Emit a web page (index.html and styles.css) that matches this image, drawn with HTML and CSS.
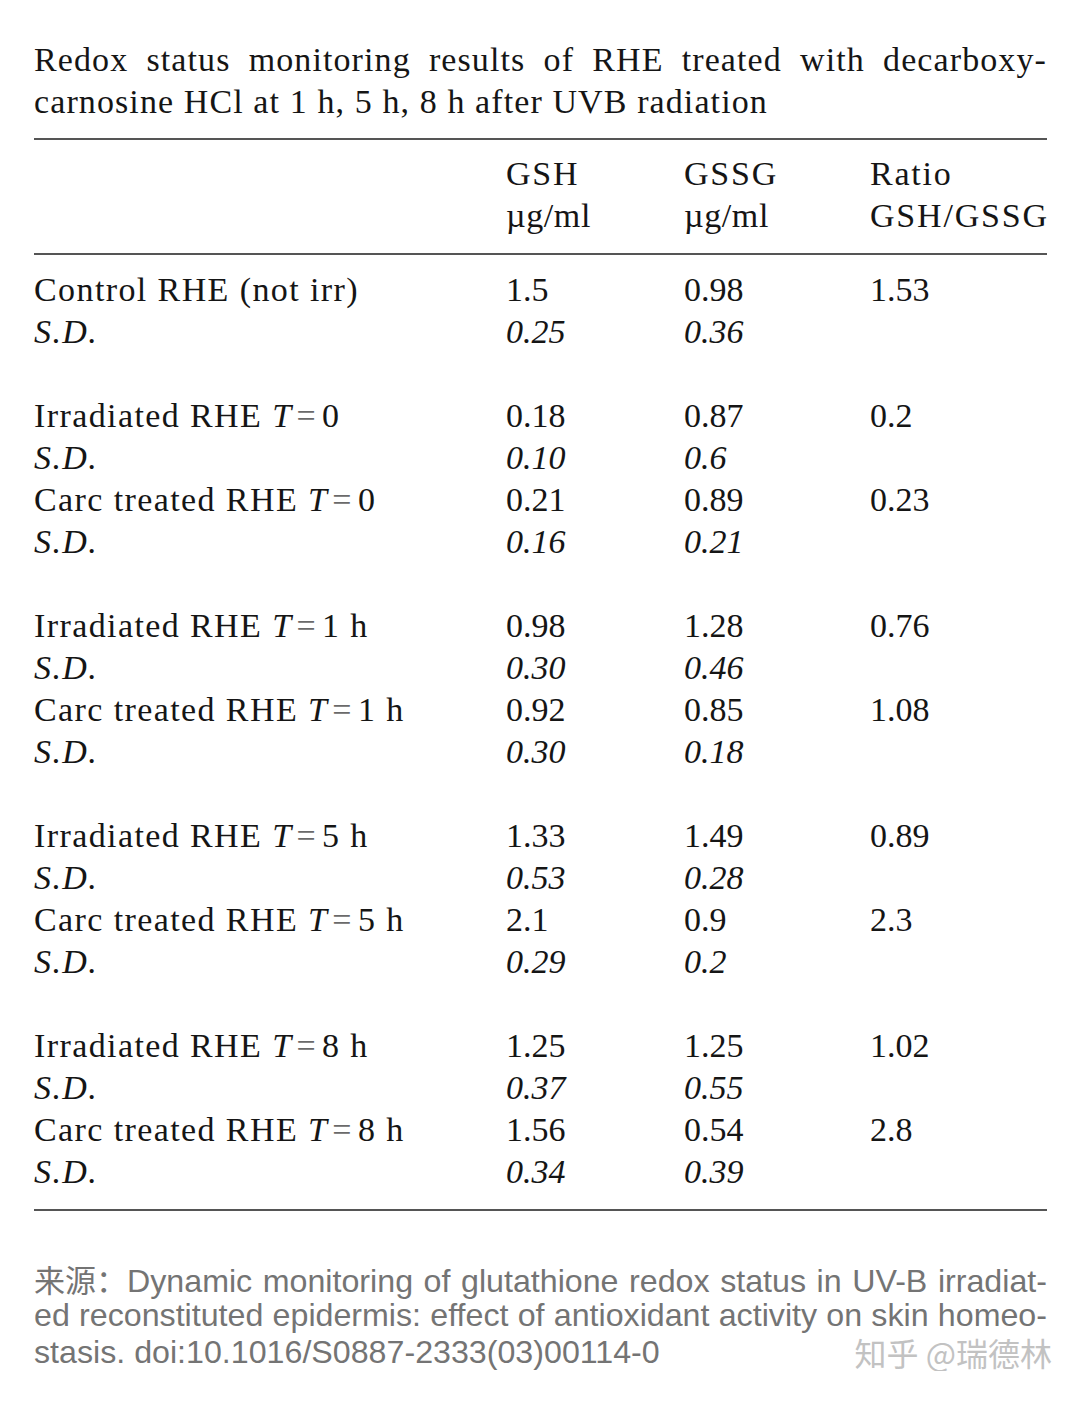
FILE: index.html
```html
<!DOCTYPE html>
<html lang="en">
<head>
<meta charset="utf-8">
<link rel="stylesheet" href="styles.css">
</head>
<body>
<div class="page">
  <div class="caption">
    <div class="cap-line just">Redox status monitoring results of RHE treated with decarboxy-</div>
    <div class="cap-line">carnosine HCl at 1 h, 5 h, 8 h after UVB radiation</div>
  </div>
  <div class="rule"></div>
  <div class="grid head">
    <div></div><div>GSH</div><div>GSSG</div><div>Ratio</div>
    <div></div><div class="unit">µg/ml</div><div class="unit">µg/ml</div><div>GSH/GSSG</div>
  </div>
  <div class="rule"></div>
  <div class="grid body">
    <div class="lab">Control RHE (not irr)</div><div>1.5</div><div>0.98</div><div>1.53</div>
    <div class="lab it">S.D.</div><div class="it">0.25</div><div class="it">0.36</div><div></div>
    <div class="gap"></div>
    <div class="lab">Irradiated RHE <i>T</i><span class="eq">=</span>0</div><div>0.18</div><div>0.87</div><div>0.2</div>
    <div class="lab it">S.D.</div><div class="it">0.10</div><div class="it">0.6</div><div></div>
    <div class="lab">Carc treated RHE <i>T</i><span class="eq">=</span>0</div><div>0.21</div><div>0.89</div><div>0.23</div>
    <div class="lab it">S.D.</div><div class="it">0.16</div><div class="it">0.21</div><div></div>
    <div class="gap"></div>
    <div class="lab">Irradiated RHE <i>T</i><span class="eq">=</span>1 h</div><div>0.98</div><div>1.28</div><div>0.76</div>
    <div class="lab it">S.D.</div><div class="it">0.30</div><div class="it">0.46</div><div></div>
    <div class="lab">Carc treated RHE <i>T</i><span class="eq">=</span>1 h</div><div>0.92</div><div>0.85</div><div>1.08</div>
    <div class="lab it">S.D.</div><div class="it">0.30</div><div class="it">0.18</div><div></div>
    <div class="gap"></div>
    <div class="lab">Irradiated RHE <i>T</i><span class="eq">=</span>5 h</div><div>1.33</div><div>1.49</div><div>0.89</div>
    <div class="lab it">S.D.</div><div class="it">0.53</div><div class="it">0.28</div><div></div>
    <div class="lab">Carc treated RHE <i>T</i><span class="eq">=</span>5 h</div><div>2.1</div><div>0.9</div><div>2.3</div>
    <div class="lab it">S.D.</div><div class="it">0.29</div><div class="it">0.2</div><div></div>
    <div class="gap"></div>
    <div class="lab">Irradiated RHE <i>T</i><span class="eq">=</span>8 h</div><div>1.25</div><div>1.25</div><div>1.02</div>
    <div class="lab it">S.D.</div><div class="it">0.37</div><div class="it">0.55</div><div></div>
    <div class="lab">Carc treated RHE <i>T</i><span class="eq">=</span>8 h</div><div>1.56</div><div>0.54</div><div>2.8</div>
    <div class="lab it">S.D.</div><div class="it">0.34</div><div class="it">0.39</div><div></div>
  </div>
  <div class="rule"></div>
  <div class="source">
    <div class="src-line just"><span class="cjk">来源：</span>Dynamic monitoring of glutathione redox status in UV-B irradiat-</div>
    <div class="src-line just">ed reconstituted epidermis: effect of antioxidant activity on skin homeo-</div>
    <div class="src-line last"><span>stasis. doi:10.1016/S0887-2333(03)00114-0</span><span class="mark">知乎 @瑞德林</span></div>
  </div>
</div>
</body>
</html>
```
FILE: styles.css
```css
html, body {
  margin: 0;
  padding: 0;
  background: #ffffff;
}
.page {
  width: 1013px;
  margin-left: 34px;
  padding-top: 39px;
  font-family: "Liberation Serif", "Times New Roman", serif;
  color: #151515;
  font-size: 34px;
}
.cap-line {
  line-height: 42px;
  height: 42px;
  white-space: nowrap;
  letter-spacing: 1.1px;
}
.just {
  text-align: justify;
  text-align-last: justify;
}
.rule {
  height: 2px;
  background: #555555;
}
.caption + .rule {
  margin-top: 15px;
}
.grid {
  display: grid;
  grid-template-columns: 472px 178px 186px 177px;
  grid-auto-rows: 42px;
  line-height: 42px;
  letter-spacing: 0;
  white-space: nowrap;
}
.head {
  padding: 13px 0 16px;
  letter-spacing: 1.8px;
}
.head .unit {
  letter-spacing: 0.6px;
}
.body {
  padding: 14px 0 16px;
}
.lab {
  letter-spacing: 1.4px;
}
.eq {
  color: #6a6a6a;
  margin: 0 5px 0 4px;
}
.gap {
  grid-column: 1 / -1;
  height: 43px;
}
.it, i {
  font-style: italic;
}
.source {
  margin-top: 49px;
  font-family: "Liberation Sans", Arial, "Noto Sans CJK SC", sans-serif;
  font-size: 32.2px;
  color: #747474;
}
.src-line {
  line-height: 37px;
  height: 37px;
  white-space: nowrap;
}
.cjk {
  display: inline-block;
  font-family: "Noto Sans CJK SC", sans-serif;
  font-size: 31px;
  line-height: 37px;
}
.src-line.last {
  display: flex;
  justify-content: space-between;
  align-items: center;
}
.mark {
  color: #c2c2c2;
  font-family: "Noto Sans CJK SC", sans-serif;
  font-size: 32px;
  line-height: 37px;
  height: 37px;
  margin-right: -5px;
}
```
